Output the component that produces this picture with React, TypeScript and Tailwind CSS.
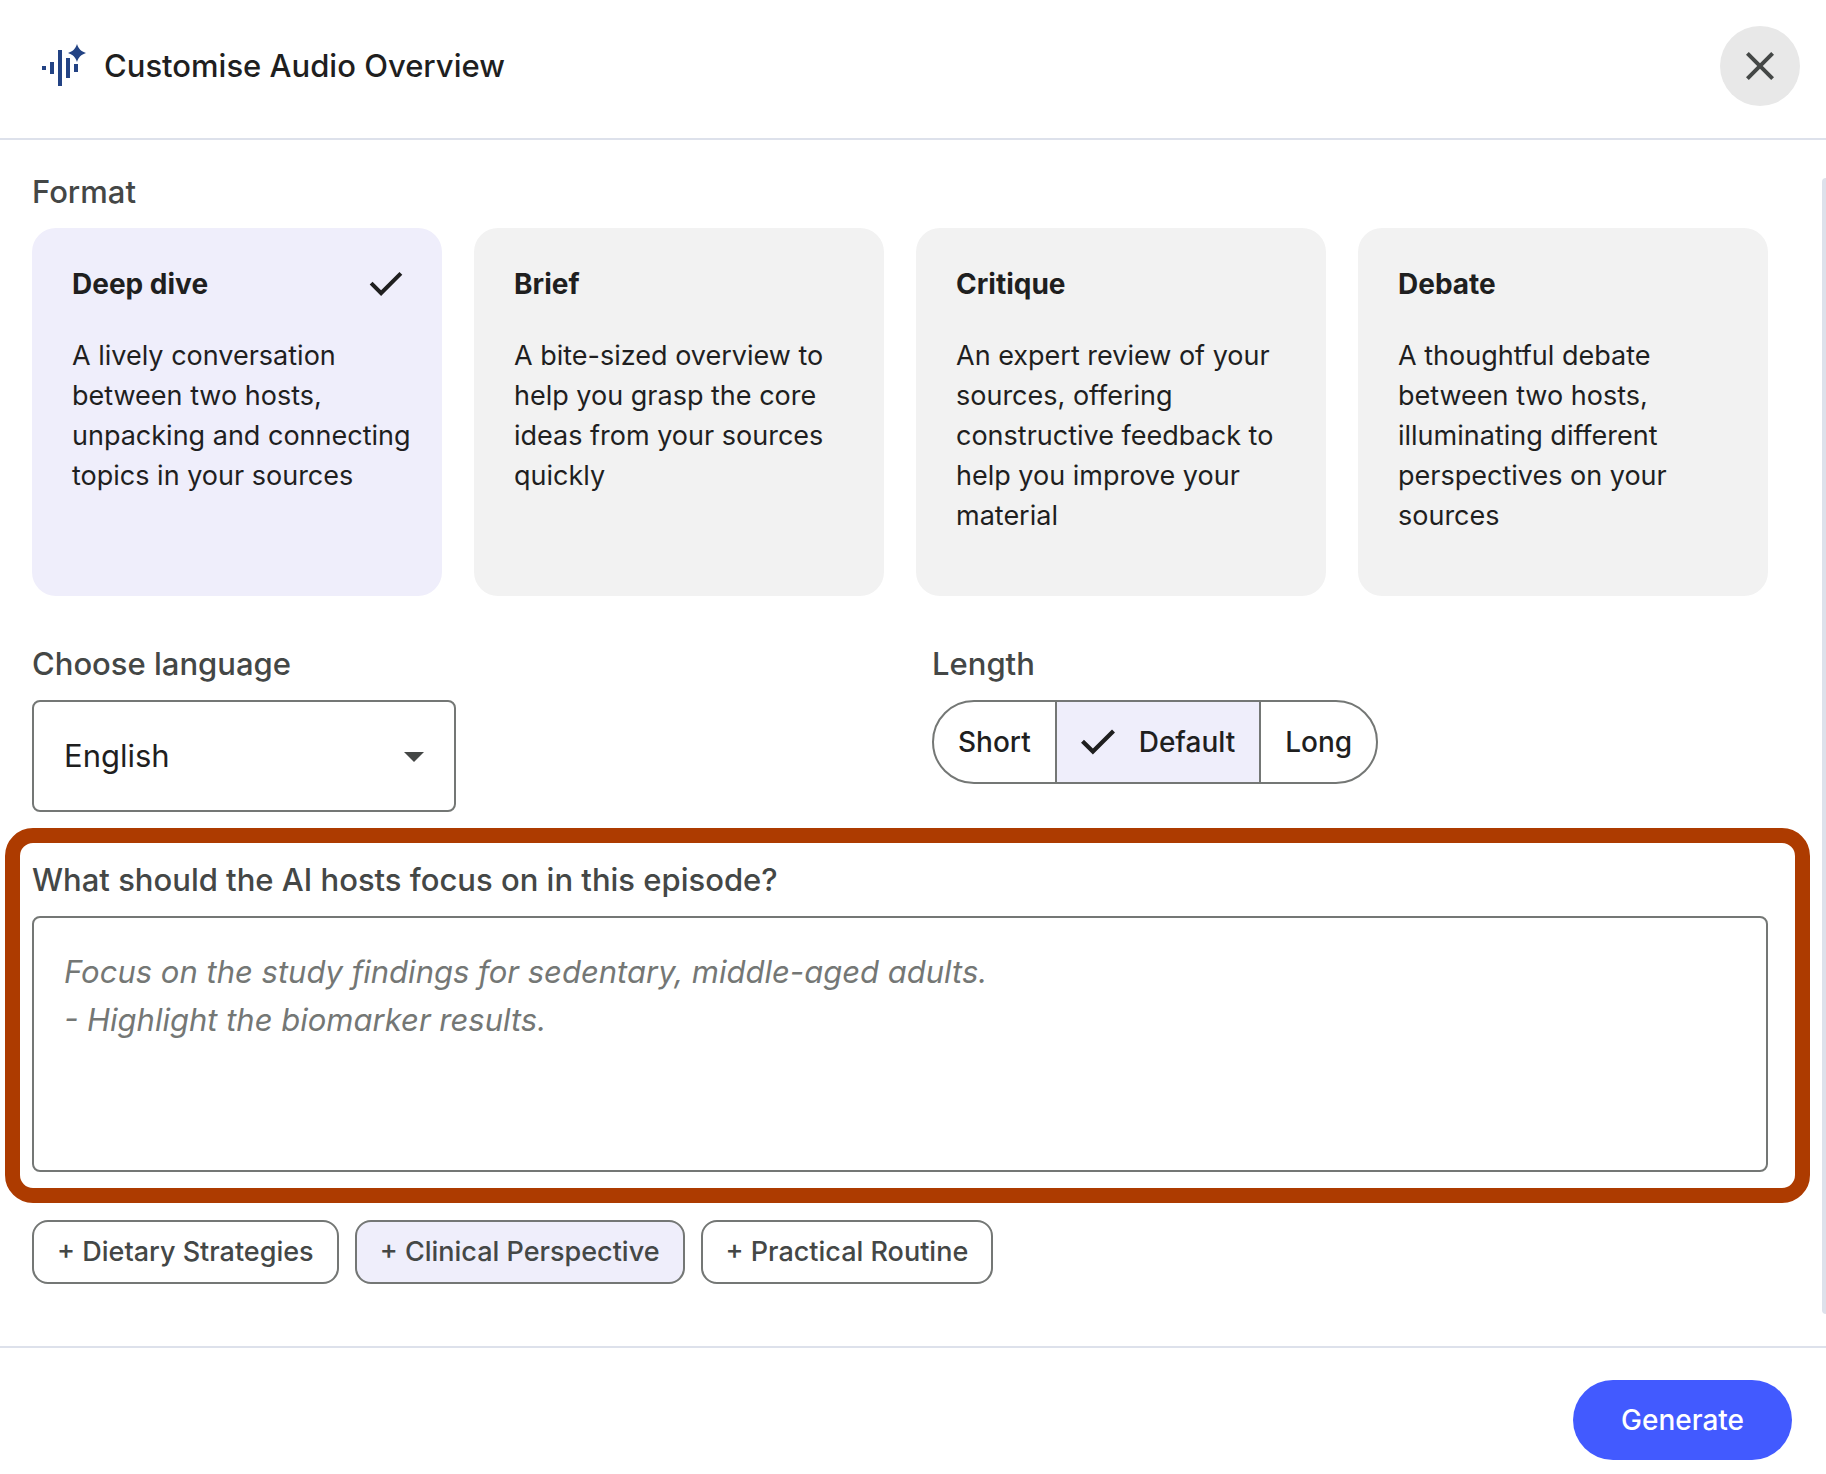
import { useState } from "react";

const formats = [
  {
    title: "Deep dive",
    text: "A lively conversation between two hosts, unpacking and connecting topics in your sources",
  },
  {
    title: "Brief",
    text: "A bite-sized overview to help you grasp the core ideas from your sources quickly",
  },
  {
    title: "Critique",
    text: "An expert review of your sources, offering constructive feedback to help you improve your material",
  },
  {
    title: "Debate",
    text: "A thoughtful debate between two hosts, illuminating different perspectives on your sources",
  },
];

const lengths = ["Short", "Default", "Long"];
const topics = ["Dietary Strategies", "Clinical Perspective", "Practical Routine"];

function Check({ className }: { className: string }) {
  return (
    <svg viewBox="0 -960 960 960" className={className} fill="currentColor" aria-hidden="true">
      <path d="M382-240 154-468l57-57 171 171 367-367 57 57-424 424Z" />
    </svg>
  );
}

function AudioIcon() {
  return (
    <svg viewBox="0 0 48 48" className="size-12 shrink-0 text-[#234384]" fill="currentColor" aria-hidden="true">
      <path d="M2 24h4v4H2zM10 20h4v12h-4zM18 8h4v36h-4zM26 16h4v20h-4zM34 22h4v8h-4z" />
      <path d="M37 2c1.6 5 4 7.400 9 9-5 1.600-7.400 4-9 9-1.600-5-4-7.400-9-9 5-1.600 7.400-4 9-9z" />
    </svg>
  );
}

export default function App() {
  const [format, setFormat] = useState("Deep dive");
  const [length, setLength] = useState("Default");
  const [topic, setTopic] = useState("Clinical Perspective");

  return (
    <div className="flex min-h-screen flex-col bg-white font-[Inter,sans-serif] text-[#1f1f1f]">
      <header className="flex items-start justify-between border-b-2 border-[#dde1eb] pt-[26px] pr-[26px] pb-8 pl-10">
        <div className="flex h-20 items-center gap-4">
          <AudioIcon />
          <h1 className="text-[31px] leading-10 font-medium">Customise Audio Overview</h1>
        </div>
        <button
          type="button"
          aria-label="Close"
          className="flex size-20 items-center justify-center rounded-full bg-[#e8e8e8] text-[#444746]"
        >
          <svg viewBox="0 0 24 24" className="size-12" fill="currentColor" aria-hidden="true">
            <path d="M6.400 19 5 17.600l5.600-5.600L5 6.400 6.400 5l5.600 5.600L17.600 5 19 6.400 13.400 12l5.600 5.600-1.400 1.400-5.600-5.600L6.400 19Z" />
          </svg>
        </button>
      </header>

      <div className="flex grow">
        <main className="min-w-0 grow pt-8 pr-[54px] pb-[62px] pl-8">
          {/* Format */}
          <section>
            <h2 className="mb-4 text-[31px] leading-10 font-medium text-[#444746]">Format</h2>
            <div className="grid grid-cols-4 gap-8">
              {formats.map((item) => (
                <button
                  key={item.title}
                  type="button"
                  aria-pressed={format === item.title}
                  onClick={() => setFormat(item.title)}
                  className={`flex min-h-[368px] flex-col rounded-3xl pt-8 pr-6 pb-8 pl-10 text-left ${
                    format === item.title ? "bg-[#efeefb]" : "bg-[#f2f2f2]"
                  }`}
                >
                  <span className="mb-7 flex h-12 w-full items-center justify-between pr-2 text-[28px] leading-10 font-bold">
                    {item.title}
                    {format === item.title && <Check className="size-12" />}
                  </span>
                  <span className="text-[27px] leading-10">{item.text}</span>
                </button>
              ))}
            </div>
          </section>

          {/* Language and length */}
          <section className="mt-12 mb-4 grid grid-cols-2 gap-16">
            <div>
              <label htmlFor="language" className="mb-4 block text-[31px] leading-10 font-medium text-[#444746]">
                Choose language
              </label>
              <div className="relative max-w-[424px]">
                <select
                  id="language"
                  className="h-28 w-full appearance-none rounded-lg border-2 border-[#747775] bg-white px-[30px] text-[31px]"
                >
                  <option>English</option>
                </select>
                <svg
                  viewBox="0 0 20 10"
                  className="pointer-events-none absolute top-[52px] right-8 h-[10px] w-5 text-[#444746]"
                  fill="currentColor"
                  aria-hidden="true"
                >
                  <path d="M0 0h20L10 10z" />
                </svg>
              </div>
            </div>
            <div>
              <h2 className="mb-4 text-[31px] leading-10 font-medium text-[#444746]">Length</h2>
              <div className="inline-flex h-[84px] divide-x-2 divide-[#747775] overflow-hidden rounded-full border-2 border-[#747775]">
                {lengths.map((item) => (
                  <button
                    key={item}
                    type="button"
                    aria-pressed={length === item}
                    onClick={() => setLength(item)}
                    className={`flex items-center gap-4 text-[28px] font-medium ${
                      length === item ? "bg-[#efeefb] pr-6 pl-4" : "px-6"
                    }`}
                  >
                    {length === item && <Check className="size-[50px]" />}
                    {item}
                  </button>
                ))}
              </div>
            </div>
          </section>

          {/* Highlighted prompt */}
          <section className="-mr-[42px] -ml-[27px] rounded-[28px] border-[15px] border-[#ad3b00] pt-[17px] pr-[27px] pb-4 pl-3">
            <label htmlFor="focus" className="mb-4 block text-[31px] leading-10 font-medium text-[#444746]">
              What should the AI hosts focus on in this episode?
            </label>
            <textarea
              id="focus"
              placeholder={"Focus on the study findings for sedentary, middle-aged adults.\n- Highlight the biomarker results."}
              className="block h-64 w-full resize-none rounded-lg border-2 border-[#747775] px-[30px] py-[30px] text-[31px] leading-[48px] placeholder:text-[#747775] placeholder:italic"
            />
          </section>

          <div className="mt-[17px] flex flex-wrap gap-4">
            {topics.map((item) => (
              <button
                key={item}
                type="button"
                aria-pressed={topic === item}
                onClick={() => setTopic(item)}
                className={`h-16 rounded-2xl border-2 border-[#747775] px-[23px] text-[27px] font-medium text-[#444746] ${
                  topic === item ? "bg-[#efeefb]" : "bg-white"
                }`}
              >
                + {item}
              </button>
            ))}
          </div>
        </main>
        {/* Scrollbar thumb */}
        <div className="mt-[38px] mb-8 w-1 shrink-0 rounded-l bg-[#dde1eb]" />
      </div>

      <footer className="flex justify-end border-t-2 border-[#dde1eb] pt-8 pr-[34px] pb-[14px]">
        <button type="button" className="h-20 rounded-full bg-[#425aff] px-12 text-[28px] font-medium text-white">
          Generate
        </button>
      </footer>
    </div>
  );
}
